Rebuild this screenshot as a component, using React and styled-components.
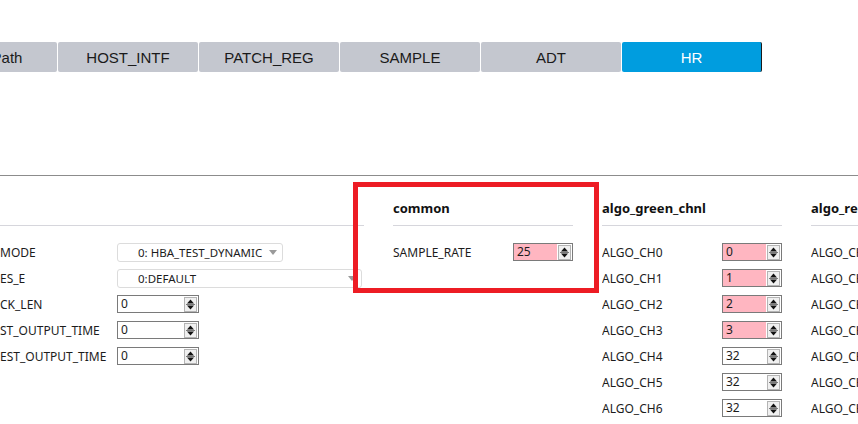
import styled, { createGlobalStyle } from 'styled-components'

const Global = createGlobalStyle`
    body {
        margin: 0;
        background: #fff;
        overflow: hidden;
        font-family: "Noto Sans", "Open Sans", sans-serif;
    }
`

const Page = styled.div`
    width: 858px;
    height: 424px;
    position: relative;
    overflow: hidden;
`

const TabBar = styled.div`
    display: flex;
    gap: 1px;
    margin: 42px 0 0 -83px;
`

const Tab = styled.div`
    flex-shrink: 0;
    width: 140px;
    height: 30px;
    box-sizing: border-box;
    display: flex;
    align-items: center;
    justify-content: center;
    border-radius: 2px;
    font-family: "Liberation Sans", Arial, sans-serif;
    font-size: 15px;
    white-space: nowrap;
    background: ${p => (p.active ? '#009ddf' : '#c4c7cf')};
    color: ${p => (p.active ? '#fff' : '#1a1a1a')};
    border-right: ${p => (p.active ? '1px solid #1a1a1a' : 'none')};
`

const Divider = styled.div`
    margin-top: 103px;
    border-top: 1px solid #8c8c8c;
`

const Panel = styled.div`
    display: flex;
    gap: 29px;
`

const Section = styled.div`
    flex-shrink: 0;
    width: ${p => p.width}px;
`

const Header = styled.div`
    height: 50px;
    box-sizing: border-box;
    padding-top: 23px;
    line-height: 18px;
    font-size: 13px;
    font-weight: 700;
    color: #111;
    border-bottom: 1px solid #d6d6dc;
`

const Rows = styled.div`
    padding-top: 13px;
`

const Row = styled.div`
    display: grid;
    grid-template-columns: ${p => p.labelWidth}px auto;
    align-items: center;
    height: 26px;
`

const Label = styled.div`
    font-size: 12px;
    color: #1c1c1c;
    white-space: nowrap;
    overflow: hidden;
`

const Select = styled.div`
    width: ${p => p.width}px;
    height: 19px;
    box-sizing: border-box;
    border: 1px solid #dcdcdc;
    border-radius: 3px;
    display: flex;
    align-items: center;
    justify-content: space-between;
    padding: 0 5px 0 20px;
    font-size: 11.5px;
    color: #1c1c1c;
    white-space: nowrap;
`

const Arrow = styled.span`
    flex-shrink: 0;
    width: 0;
    height: 0;
    border-left: 4px solid transparent;
    border-right: 4px solid transparent;
    border-top: 5px solid #9a9a9a;
`

const Spin = styled.div`
    width: ${p => p.width}px;
    height: 18px;
    box-sizing: border-box;
    border: 1px solid #7a7a7a;
    display: flex;
    background: #fff;
`

const SpinValue = styled.div`
    flex: 1;
    padding-left: 3px;
    font-size: 12px;
    line-height: 16px;
    color: #1c1c1c;
    background: ${p => (p.pink ? '#ffb6c1' : '#fff')};
`

const SpinButtons = styled.div`
    width: 15px;
    display: flex;
    align-items: center;
    justify-content: center;
`

const Highlight = styled.div`
    position: absolute;
    left: 353px;
    top: 182px;
    width: 246px;
    height: 111px;
    box-sizing: border-box;
    border: 5px solid #ed1c24;
`

let Spinner = () => (
    <svg width="13" height="15" viewBox="0 0 13 15">
        <rect x="0.5" y="0.5" width="12" height="14" fill="#f0f0f0" stroke="#b4b4b4" />
        <polygon points="3,6.5 6.5,2.5 10,6.5" fill="#111" />
        <line x1="2" y1="7.5" x2="11" y2="7.5" stroke="#777" />
        <polygon points="3,8.5 10,8.5 6.5,12.5" fill="#111" />
    </svg>
)

let SpinBox = ({ value, width, pink }) => (
    <Spin width={width}>
        <SpinValue pink={pink}>{value}</SpinValue>
        <SpinButtons><Spinner /></SpinButtons>
    </Spin>
)

const tabs = ['Data_Path', 'HOST_INTF', 'PATCH_REG', 'SAMPLE', 'ADT', 'HR']

const leftRows = [
    { label: 'MODE', select: '0: HBA_TEST_DYNAMIC', width: 166 },
    { label: 'ES_E', select: '0:DEFAULT', width: 245 },
    { label: 'CK_LEN', value: '0' },
    { label: 'ST_OUTPUT_TIME', value: '0' },
    { label: 'EST_OUTPUT_TIME', value: '0' },
]

const channels = ['0', '1', '2', '3', '32', '32', '32']

let App = () => {
    return (
        <Page>
            <Global />
            <TabBar>
                {tabs.map(t => (
                    <Tab key={t} active={t === 'HR'}>{t}</Tab>
                ))}
            </TabBar>
            <Divider />
            <Panel>
                <Section width={364}>
                    <Header />
                    <Rows>
                        {leftRows.map(r => (
                            <Row key={r.label} labelWidth={117}>
                                <Label>{r.label}</Label>
                                {r.select ? (
                                    <Select width={r.width}>
                                        <span>{r.select}</span>
                                        <Arrow />
                                    </Select>
                                ) : (
                                    <SpinBox value={r.value} width={82} />
                                )}
                            </Row>
                        ))}
                    </Rows>
                </Section>

                <Section width={180}>
                    <Header>common</Header>
                    <Rows>
                        <Row labelWidth={120}>
                            <Label>SAMPLE_RATE</Label>
                            <SpinBox value="25" width={60} pink />
                        </Row>
                    </Rows>
                </Section>

                <Section width={180}>
                    <Header>algo_green_chnl</Header>
                    <Rows>
                        {channels.map((v, i) => (
                            <Row key={i} labelWidth={120}>
                                <Label>ALGO_CH{i}</Label>
                                <SpinBox value={v} width={60} pink={i < 4} />
                            </Row>
                        ))}
                    </Rows>
                </Section>

                <Section width={180}>
                    <Header>algo_red_chnl</Header>
                    <Rows>
                        {channels.map((v, i) => (
                            <Row key={i} labelWidth={120}>
                                <Label>ALGO_CH{i}</Label>
                                <SpinBox value={v} width={60} pink={i < 4} />
                            </Row>
                        ))}
                    </Rows>
                </Section>
            </Panel>
            <Highlight />
        </Page>
    )
}

export default App
